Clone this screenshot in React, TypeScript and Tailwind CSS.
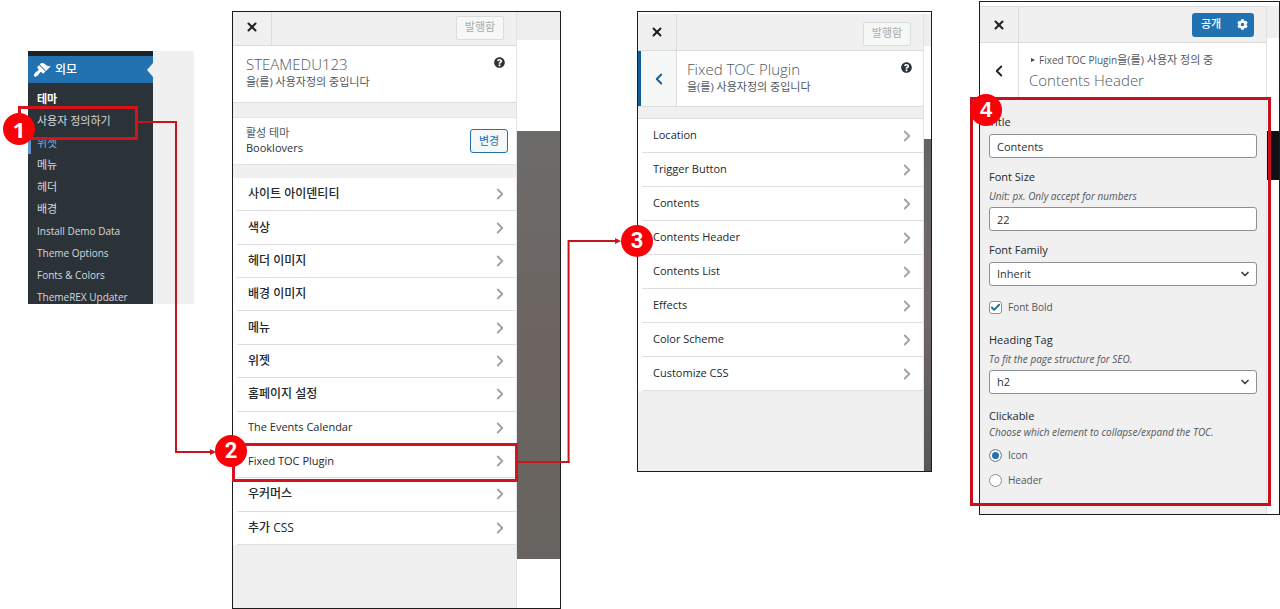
import { useState, type ReactNode } from "react";
import { X, ChevronRight, ChevronLeft, ChevronDown, Check } from "lucide-react";
import { FaQuestionCircle, FaCog } from "react-icons/fa";

const MENU = ["테마", "사용자 정의하기", "위젯", "메뉴", "헤더", "배경", "Install Demo Data", "Theme Options", "Fonts & Colors", "ThemeREX Updater"];

const SECTIONS = ["사이트 아이덴티티", "색상", "헤더 이미지", "배경 이미지", "메뉴", "위젯", "홈페이지 설정", "The Events Calendar", "Fixed TOC Plugin", "우커머스", "추가 CSS"];

const TOC_SECTIONS = ["Location", "Trigger Button", "Contents", "Contents Header", "Contents List", "Effects", "Color Scheme", "Customize CSS"];

const isKorean = (text: string) => /[가-힣]/.test(text);

function Badge({ n, className }: { n: number; className: string }) {
  return (
    <span className={`absolute z-20 flex size-8 items-center justify-center rounded-full bg-[#fb0007] text-[22px] leading-none font-bold text-white ${className}`}>
      {n}
    </span>
  );
}

function BrushIcon() {
  return (
    <svg viewBox="0 0 20 20" className="size-[18px] fill-white" aria-hidden="true">
      <path d="M14.48 11.06L7.41 3.99l1.5-1.5c.5-.56 2.3-.47 3.51.32 1.21.8 1.43 1.28 2.91 2.1 1.18.64 2.45 1.26 4.45.85zm-.71.71L6.7 4.7 4.93 6.47c-.39.39-.39 1.02 0 1.41l1.06 1.06c.39.39.39 1.03 0 1.42-.6.6-1.43 1.11-2.21 1.69-.35.26-.7.53-1.01.84C1.43 14.23.4 16.08 1.4 17.07c.99 1 2.84-.03 4.18-1.36.31-.31.58-.66.85-1.02.57-.78 1.08-1.61 1.69-2.21.39-.39 1.02-.39 1.41 0l1.06 1.06c.39.39 1.02.39 1.41 0z" />
    </svg>
  );
}

function Sidebar() {
  return (
    <div className="col-start-2 mt-[51px] flex bg-[#f0f0f1]">
      <nav className="w-3/4 bg-[#2c3338] pt-[5px] text-[#d5d9dc] shadow-[inset_0_5px_#1d2327]">
        <a href="#appearance" className="relative flex h-[27px] items-center gap-1 bg-[#2271b1] pl-[5px] text-xs font-medium text-white">
          <BrushIcon />
          외모
          <svg viewBox="0 0 6 14" className="absolute right-0 h-3.5 w-1.5 fill-[#f0f0f1]" aria-hidden="true">
            <path d="M6 0 0 7l6 7z" />
          </svg>
        </a>
        <ul className="h-[221px] pt-[5px]">
          {MENU.map((item, i) => (
            <li key={item} className={i === 1 ? "relative z-10 h-[22px]" : "h-[22px]"}>
              <a
                href={`#menu-${i}`}
                className={`flex h-[22px] items-center whitespace-nowrap pl-[9px] ${isKorean(item) ? "text-[11px]" : "text-[10px]"} ${i === 0 ? "font-bold text-white" : ""} ${i === 2 ? "text-[#72aee6] shadow-[inset_3px_0_#5b97cc]" : ""}`}
              >
                {item}
              </a>
              {i === 1 && (
                <>
                  <span className="absolute -left-2.5 -right-[-15px] -top-1 h-[34px] border-3 border-[#d6131c]" />
                  <Badge n={1} className="-left-[25px] top-[3px] font-['Open_Sans',sans-serif]" />
                </>
              )}
            </li>
          ))}
        </ul>
      </nav>
    </div>
  );
}

function CloseButton() {
  return (
    <button type="button" aria-label="닫기" className="flex w-[39px] items-center justify-center border-r border-[#dcdcde] text-[#1d2327]">
      <X size={14} strokeWidth={3.5} />
    </button>
  );
}

function Published() {
  return (
    <button type="button" disabled className="h-6 w-12 rounded-xs border border-[#dcdcde] bg-[#f6f7f7] text-[11px] text-[#a7aaad]">
      발행함
    </button>
  );
}

function Heading({ title }: { title: string }) {
  return (
    <>
      <div className="min-w-0 flex-1">
        <h2 className="text-[15px] leading-[18px] font-light text-[#50575e]">{title}</h2>
        <p className="text-[11px] leading-[18px] text-[#50575e]">을(를) 사용자정의 중입니다</p>
      </div>
      <button type="button" aria-label="도움말" className="self-start pt-0.5 text-[#2c3338]">
        <FaQuestionCircle size={11} />
      </button>
    </>
  );
}

function SectionRow({ label, children, className }: { label: string; children?: ReactNode; className: string }) {
  return (
    <li className={`relative flex border-b border-[#dfdfe1] ${className}`}>
      <a
        href={`#${label.replace(/ /g, "-")}`}
        className={`flex flex-1 items-center justify-between font-medium text-[#23282d] ${isKorean(label) ? "text-xs" : "text-[11px]"}`}
      >
        {label}
        <ChevronRight size={18} strokeWidth={2.5} className="text-[#a0a3a7]" />
      </a>
      {children}
    </li>
  );
}

function ThemePanel() {
  return (
    <section className="col-start-4 mt-[11px] flex min-h-[598px] border border-[#1c1c1c]">
      <div className="relative flex min-w-0 flex-1 flex-col border-r border-[#e2e2e4] bg-[#f0f0f1]">
        <header className="flex h-[34px] items-stretch justify-between border-b border-[#dcdcde]">
          <div className="flex pb-[3px] shadow-[inset_-1px_0_#dcdcde]"><CloseButton /></div>
          <div className="flex items-center pr-3 pb-0.5"><Published /></div>
        </header>
        <div className="flex h-[57px] border-b border-[#dcdcde] bg-white pt-[9px] pr-[11px] pl-[13px]">
          <Heading title="STEAMEDU123" />
        </div>
        <div className="mt-3.5 flex h-12 items-center justify-between border-y border-[#e4e4e6] bg-white pr-2 pl-[13px]">
          <p className="pb-0.5 text-[11px] leading-[15px] text-[#50575e]">
            활성 테마
            <span className="block text-[#2c3338]">Booklovers</span>
          </p>
          <button type="button" className="h-6 w-[38px] rounded-[3px] border border-[#2271b1] bg-[#f6f7f7] text-[11px] text-[#2271b1]">변경</button>
        </div>
        <ul className="mt-[13px] grid h-[367px] auto-rows-fr bg-white pl-1">
          {SECTIONS.map((s) => (
            <SectionRow key={s} label={s} className="pr-[7px] pl-[11px]">
              {s === "Fixed TOC Plugin" && (
                <>
                  <span className="absolute -right-0.5 -left-[5px] -top-[2px] h-[39px] border-3 border-[#d6131c]" />
                  <Badge n={2} className="-left-[22px] -top-[10px] font-[Roboto,sans-serif]" />
                </>
              )}
            </SectionRow>
          ))}
        </ul>
      </div>
      <div className="flex w-[43px] flex-col">
        <div className="h-7 bg-[#eeeeef]" />
        <div className="h-[91px] bg-white" />
        <div className="h-[428px] bg-linear-to-b from-[#6c6c6b] via-[#6c6460] to-[#686461]" />
      </div>
    </section>
  );
}

function TocPanel() {
  return (
    <section className="col-start-6 mt-[11px] flex min-h-[461px] border border-[#1c1c1c] pt-0.5">
      <div className="flex min-w-0 flex-1 flex-col border-r border-[#e2e2e4] bg-[#f0f0f1]">
        <header className="flex h-[37px] items-stretch justify-between border-b border-[#dcdcde]">
          <CloseButton />
          <div className="flex items-center pt-[3px] pr-3"><Published /></div>
        </header>
        <div className="flex h-14 border-b border-[#dcdcde] bg-white pr-[11px]">
          <button type="button" aria-label="뒤로" className="flex w-[39px] items-center justify-center border-r border-l-3 border-r-[#dcdcde] border-l-[#135e96] bg-[#f6f7f7] text-[#135e96]">
            <ChevronLeft size={18} strokeWidth={2.5} />
          </button>
          <div className="flex flex-1 pt-[9px] pl-2.5"><Heading title="Fixed TOC Plugin" /></div>
        </div>
        <ul className="mt-[11px] border-t border-[#dcdcde] bg-white pl-1">
          {TOC_SECTIONS.map((s) => (
            <SectionRow key={s} label={s} className="h-[34px] pr-[7px] pl-[11px]">
              {s === "Contents Header" && <Badge n={3} className="-left-[21px] top-1 font-[Roboto,sans-serif]" />}
            </SectionRow>
          ))}
        </ul>
      </div>
      <div className="flex w-[7px] flex-col">
        <div className="h-8 bg-[#eeeeef]" />
        <div className="h-[93px] bg-white" />
        <div className="flex-1 bg-linear-to-b from-[#646464] via-[#70676a] to-[#585655]" />
      </div>
    </section>
  );
}

const FIELD = "h-6 w-full rounded-[3px] border border-[#8c8f94] bg-white px-[7px] text-[11px] text-[#2c3338]";
const LABEL = "block text-[11px] leading-4 font-medium text-[#23282d]";
const HINT = "text-[10px] leading-4 text-[#50575e] italic";
const CHOICE = "flex h-4 items-center gap-1.5 text-[10px] text-[#50575e]";

function SelectField({ id, value, options }: { id: string; value: string; options: string[] }) {
  return (
    <div className="relative flex items-center">
      <select id={id} defaultValue={value} className={`${FIELD} appearance-none`}>
        {options.map((o) => <option key={o}>{o}</option>)}
      </select>
      <ChevronDown size={12} strokeWidth={3.5} className="pointer-events-none absolute right-1.5 text-[#3c434a]" />
    </div>
  );
}

function HeaderPanel() {
  const [bold, setBold] = useState(true);
  const [target, setTarget] = useState("Icon");
  return (
    <section className="relative col-start-8 mt-px flex min-h-[514px] border border-[#1c1c1c] pt-1">
      <div className="flex min-w-0 flex-1 flex-col border-r border-[#e2e2e4] bg-[#f0f0f1]">
        <header className="flex h-[37px] items-stretch justify-between border-y border-[#dcdcde]">
          <CloseButton />
          <div className="flex items-center pr-3">
            <button type="button" className="h-6 w-[38px] rounded-l-[3px] bg-[#2271b1] text-[11px] font-medium text-white">공개</button>
            <button type="button" aria-label="설정" className="flex h-6 w-6 items-center justify-center rounded-r-[3px] bg-[#2271b1] text-white">
              <FaCog size={11} />
            </button>
          </div>
        </header>
        <div className="flex h-[55px] bg-white">
          <button type="button" aria-label="뒤로" className="flex w-[39px] items-center justify-center border-r border-[#dcdcde] text-[#1d2327]">
            <ChevronLeft size={18} strokeWidth={2.5} />
          </button>
          <div className="pt-[7px] pl-2.5 whitespace-nowrap text-[#50575e]">
            <p className="flex items-center gap-1 text-[11px] leading-5">
              <svg viewBox="0 0 5 5" className="ml-0.5 size-1 fill-[#3c434a]" aria-hidden="true"><path d="M0 0l5 2.500L0 5z" /></svg>
              <span><span className="text-[10px]">Fixed TOC Plugin</span>을(를) 사용자 정의 중</span>
            </p>
            <h2 className="text-[15px] leading-5 font-light">Contents Header</h2>
          </div>
        </div>
        <form className="flex flex-col pt-4 pr-[9px] pl-[9px]">
          <label htmlFor="title" className={LABEL}>Title</label>
          <input id="title" defaultValue="Contents" className={`${FIELD} mt-1`} />
          <label htmlFor="size" className={`${LABEL} mt-[11px]`}>Font Size</label>
          <p className={`${HINT} my-[3px]`}>Unit: px. Only accept for numbers</p>
          <input id="size" defaultValue="22" className={FIELD} />
          <label htmlFor="family" className={`${LABEL} mt-[11px] mb-1`}>Font Family</label>
          <SelectField id="family" value="Inherit" options={["Inherit", "Serif", "Sans-serif"]} />
          <label className={`${CHOICE} mt-[13px]`}>
            <span className="relative flex size-[13px] items-center justify-center">
              <input type="checkbox" checked={bold} onChange={(e) => setBold(e.target.checked)} className="size-[13px] appearance-none rounded-[3px] border border-[#8c8f94] bg-white" />
              {bold && <Check size={11} strokeWidth={4} className="pointer-events-none absolute text-[#1f6a9c]" />}
            </span>
            Font Bold
          </label>
          <label htmlFor="tag" className={`${LABEL} mt-[17px]`}>Heading Tag</label>
          <p className={`${HINT} my-[3px]`}>To fit the page structure for SEO.</p>
          <SelectField id="tag" value="h2" options={["h1", "h2", "h3", "h4"]} />
          <fieldset className="mt-3.5">
            <legend className={LABEL}>Clickable</legend>
            <p className={HINT}>Choose which element to collapse/expand the TOC.</p>
            <div className="mt-[7px] flex flex-col gap-[9px]">
              {["Icon", "Header"].map((o) => (
                <label key={o} className={CHOICE}>
                  <input
                    type="radio"
                    name="target"
                    checked={target === o}
                    onChange={() => setTarget(o)}
                    className="size-[13px] appearance-none rounded-full border border-[#8c8f94] bg-white checked:bg-[#2271b1] checked:shadow-[inset_0_0_0_2px_white]"
                  />
                  {o}
                </label>
              ))}
            </div>
          </fieldset>
        </form>
      </div>
      <div className="flex w-3 flex-col">
        <div className="h-8 bg-[#eeeeef]" />
        <div className="h-[93px] bg-white" />
        <div className="h-[49px] bg-[#101014]" />
      </div>
      <span className="pointer-events-none absolute top-[95px] right-2 bottom-2 -left-2.5 border-3 border-[#c8101c]" />
      <Badge n={4} className="top-[92px] -left-2.5 font-['Liberation_Sans',sans-serif]" />
    </section>
  );
}

function Connectors() {
  return (
    <svg className="pointer-events-none absolute inset-0 z-10 size-full" stroke="#c8141c" strokeWidth="2" aria-hidden="true">
      <line x1="10.7%" y1="122" x2="13.83%" y2="122" />
      <line x1="13.75%" y1="122" x2="13.75%" y2="453" />
      <line x1="13.75%" y1="452" x2="16.5%" y2="452" />
      <line x1="40.4%" y1="462" x2="44.5%" y2="462" />
      <line x1="44.42%" y1="463" x2="44.42%" y2="240" />
      <line x1="44.42%" y1="241" x2="48.1%" y2="241" />
      <svg x="16.4%" y="449" width="6" height="6" fill="#c8141c" stroke="none"><path d="M0 0l6 3-6 3z" /></svg>
      <svg x="48.05%" y="238" width="6" height="6" fill="#c8141c" stroke="none"><path d="M0 0l6 3-6 3z" /></svg>
    </svg>
  );
}

export default function App() {
  return (
    <main className="relative grid min-h-screen grid-cols-[28fr_166fr_38fr_329fr_76fr_295fr_47fr_301fr] items-start bg-white font-['Open_Sans','Noto_Sans_CJK_KR',sans-serif]">
      <Sidebar />
      <ThemePanel />
      <TocPanel />
      <HeaderPanel />
      <Connectors />
    </main>
  );
}
